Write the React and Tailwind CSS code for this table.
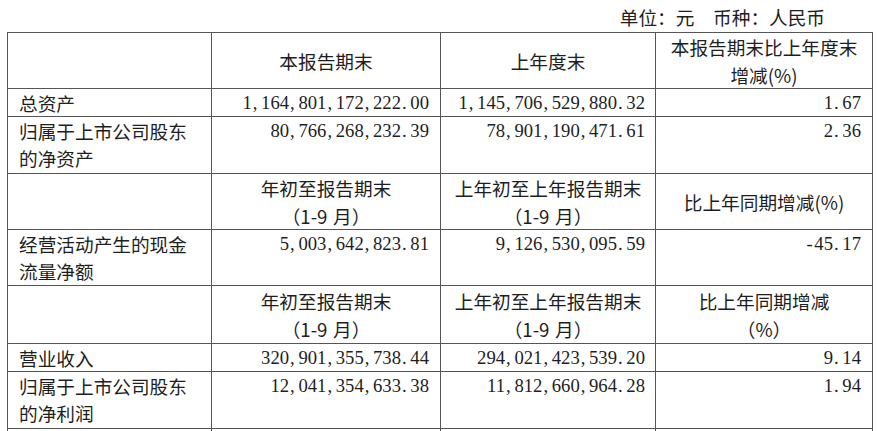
import React from "react";

const cjk = { fontFamily: '"Noto Sans CJK SC", "Noto Sans", sans-serif' };
const serif = { fontFamily: '"Liberation Serif", "Noto Sans CJK SC", serif' };

function Num({ v }) {
  return (
    <>
      {v.split("").map((c, i) =>
        c === "," || c === "." ? (
          <span key={i} className="inline-block w-[0.5em] text-left pl-[1px]">{c}</span>
        ) : c === "-" ? (
          <span key={i} className="inline-block w-[0.5em] text-center">-</span>
        ) : (
          <span key={i}>{c}</span>
        )
      )}
    </>
  );
}

const td = "border border-[#555] align-top leading-[27px] px-[11px] py-0";
const th = "border border-[#555] align-middle text-center leading-[27.5px] px-1 py-0 font-normal";

function DataRow({ label, vals, h }) {
  return (
    <tr className={h}>
      <td className={td}>{label}</td>
      <td className={td + " text-right"} style={serif}><Num v={vals[0]} /></td>
      <td className={td + " text-right pr-[10px]"} style={serif}><Num v={vals[1]} /></td>
      <td className={td + " text-right"} style={serif}><Num v={vals[2]} /></td>
    </tr>
  );
}

function Period() {
  return <>（1-9<span className="inline-block w-[0.3em]"></span>月）</>;
}

export default function App() {
  return (
    <div className="w-[877px] h-[431px] overflow-hidden bg-white text-[#1e1e1e] text-[18.67px] [text-spacing-trim:space-all]" style={cjk}>
      <div className="h-[32px] leading-[28px] pt-[3px] text-right pr-[52px]">单位：元　币种：人民币</div>
      <div className="pl-[7px]">
        <table className="table-fixed border-collapse w-[865px]">
          <colgroup>
            <col className="w-[204px]" />
            <col className="w-[229px]" />
            <col className="w-[215px]" />
            <col className="w-[217px]" />
          </colgroup>
          <tbody>
            <tr className="h-[56px]">
              <th className={th}></th>
              <th className={th}>本报告期末</th>
              <th className={th}>上年度末</th>
              <th className={th}>本报告期末比上年度末<br />增减(%)</th>
            </tr>
            <DataRow h="h-[28px]" label="总资产" vals={["1,164,801,172,222.00", "1,145,706,529,880.32", "1.67"]} />
            <DataRow h="h-[57px]" label={<>归属于上市公司股东<br />的净资产</>} vals={["80,766,268,232.39", "78,901,190,471.61", "2.36"]} />
            <tr className="h-[56px]">
              <th className={th}></th>
              <th className={th}>年初至报告期末<br /><Period /></th>
              <th className={th}>上年初至上年报告期末<br /><Period /></th>
              <th className={th}>比上年同期增减(%)</th>
            </tr>
            <DataRow h="h-[56px]" label={<>经营活动产生的现金<br />流量净额</>} vals={["5,003,642,823.81", "9,126,530,095.59", "-45.17"]} />
            <tr className="h-[58px]">
              <th className={th}></th>
              <th className={th}>年初至报告期末<br /><Period /></th>
              <th className={th}>上年初至上年报告期末<br /><Period /></th>
              <th className={th}>比上年同期增减<br />（%）</th>
            </tr>
            <DataRow h="h-[27px]" label="营业收入" vals={["320,901,355,738.44", "294,021,423,539.20", "9.14"]} />
            <DataRow h="h-[57px]" label={<>归属于上市公司股东<br />的净利润</>} vals={["12,041,354,633.38", "11,812,660,964.28", "1.94"]} />
            <DataRow h="h-[84px]" label={<>归属于上市公司股东<br />的扣除非经常性损益<br />的净利润</>} vals={["11,584,170,866.28", "11,105,836,372.16", "4.31"]} />
          </tbody>
        </table>
      </div>
    </div>
  );
}
